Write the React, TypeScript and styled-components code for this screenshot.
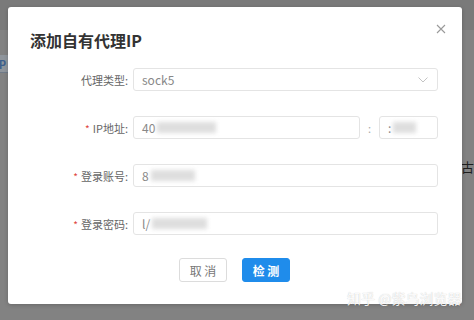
import React from "react";
import styled, { createGlobalStyle } from "styled-components";

const GlobalStyle = createGlobalStyle`
  html, body {
    margin: 0;
    padding: 0;
    background: #808080;
  }
  * {
    box-sizing: border-box;
  }
`;

type Field = {
  label: string;
  required?: boolean;
  value: string;
  blur: number;
};

const fields: Field[] = [
  { label: "登录账号:", required: true, value: "8", blur: 44 },
  { label: "登录密码:", required: true, value: "l/", blur: 55 },
];

const App: React.FC = () => {
  return (
    <>
      <GlobalStyle />
      <Page>
        <TopBand />
        <SideTab>IP</SideTab>
        <SideHint>古</SideHint>

        <Modal>
          <CloseButton aria-label="close">
            <svg width="10" height="10" viewBox="0 0 10 10">
              <path d="M1 1L9 9M9 1L1 9" stroke="#9a9a9a" strokeWidth="1.1" fill="none" />
            </svg>
          </CloseButton>

          <Title>添加自有代理IP</Title>

          <Form>
            <Row>
              <Label>代理类型:</Label>
              <Select>
                <Value>sock5</Value>
                <svg width="10" height="6" viewBox="0 0 10 6">
                  <path d="M0.5 0.5L5 5L9.5 0.5" stroke="#c4c4c4" strokeWidth="1" fill="none" />
                </svg>
              </Select>
            </Row>

            <Row>
              <Label>
                <Star>*</Star>IP地址:
              </Label>
              <Input $width={227}>
                <Value>40</Value>
                <Blur $width={59} />
              </Input>
              <Colon>:</Colon>
              <Input $width={59}>
                <Value>:</Value>
                <Blur $width={23} />
              </Input>
            </Row>

            {fields.map((f) => (
              <Row key={f.label}>
                <Label>
                  {f.required && <Star>*</Star>}
                  {f.label}
                </Label>
                <Input>
                  <Value>{f.value}</Value>
                  <Blur $width={f.blur} />
                </Input>
              </Row>
            ))}
          </Form>

          <Footer>
            <Button>取 消</Button>
            <Button $primary>检 测</Button>
          </Footer>
        </Modal>

        <Watermark>知乎 @紫鸟浏览器</Watermark>
      </Page>
    </>
  );
};

export default App;

const Page = styled.div`
  position: relative;
  width: 474px;
  height: 320px;
  padding: 7px 12px 16px 8px;
  display: flex;
  background: #828282;
  overflow: hidden;
  font-family: "Noto Sans CJK SC", "Open Sans", sans-serif;
`;

const TopBand = styled.div`
  position: absolute;
  left: 0;
  top: 0;
  width: 100%;
  height: 30px;
  background: #7a7a7a;
`;

const SideTab = styled.div`
  position: absolute;
  left: -7px;
  top: 55px;
  width: 21px;
  height: 18px;
  padding-left: 2px;
  background: #8f959c;
  border-bottom: 1px solid #6f7a88;
  color: #3c5f8c;
  font-size: 11px;
  font-weight: bold;
  line-height: 18px;
`;

const SideHint = styled.div`
  position: absolute;
  left: 461px;
  top: 159px;
  color: #1e1e1e;
  font-size: 13px;
  line-height: 16px;
`;

const Modal = styled.div`
  position: relative;
  flex: 1;
  display: flex;
  flex-direction: column;
  padding: 22px 24px 0 22px;
  background: #fff;
  border-radius: 3px;
  box-shadow: 0 1px 4px rgba(0, 0, 0, 0.2);
`;

const CloseButton = styled.div`
  position: absolute;
  top: 17px;
  right: 16px;
  width: 10px;
  height: 10px;
  display: flex;
`;

const Title = styled.div`
  height: 22px;
  font-size: 16px;
  line-height: 22px;
  font-weight: bold;
  color: #333;
`;

const Form = styled.div`
  margin-top: 17px;
  display: flex;
  flex-direction: column;
  gap: 25px;
`;

const Row = styled.div`
  display: flex;
  align-items: center;
  height: 23px;
`;

const Label = styled.div`
  width: 98px;
  margin-right: 5px;
  text-align: right;
  font-size: 11px;
  color: #666;
  white-space: nowrap;
`;

const Star = styled.span`
  color: #e0453e;
  font-size: 10px;
  margin-right: 3px;
`;

const Box = styled.div`
  height: 23px;
  display: flex;
  align-items: center;
  padding-left: 8px;
  border: 1px solid #e4e4e4;
  border-radius: 3px;
  background: #fff;
`;

const Select = styled(Box)`
  flex: 1;
  justify-content: space-between;
  padding-right: 9px;
`;

const Input = styled(Box)<{ $width?: number }>`
  ${(p) => (p.$width ? `width: ${p.$width}px;` : "flex: 1;")}
`;

const Value = styled.span`
  font-size: 12px;
  color: #888;
`;

const Blur = styled.span<{ $width: number }>`
  width: ${(p) => p.$width}px;
  height: 11px;
  margin-left: 2px;
  background: #dedede;
  filter: blur(2px);
`;

const Colon = styled.span`
  width: 19px;
  text-align: center;
  font-size: 11px;
  color: #aaa;
`;

const Footer = styled.div`
  margin-top: 23px;
  display: flex;
  justify-content: center;
  gap: 15px;
  padding-left: 1px;
`;

const Button = styled.div<{ $primary?: boolean }>`
  width: 48px;
  height: 24px;
  display: flex;
  align-items: center;
  justify-content: center;
  border-radius: 3px;
  font-size: 12px;
  border: 1px solid ${(p) => (p.$primary ? "#1f8ceb" : "#dcdcdc")};
  background: ${(p) => (p.$primary ? "#1f8ceb" : "#fff")};
  color: ${(p) => (p.$primary ? "#fff" : "#777")};
  font-weight: ${(p) => (p.$primary ? "bold" : "normal")};
`;

const Watermark = styled.div`
  position: absolute;
  left: 347px;
  top: 289px;
  font-size: 14px;
  line-height: 18px;
  color: rgba(255, 255, 255, 0.92);
  text-shadow: 0 0 1px rgba(0, 0, 0, 0.25);
  white-space: nowrap;
`;
